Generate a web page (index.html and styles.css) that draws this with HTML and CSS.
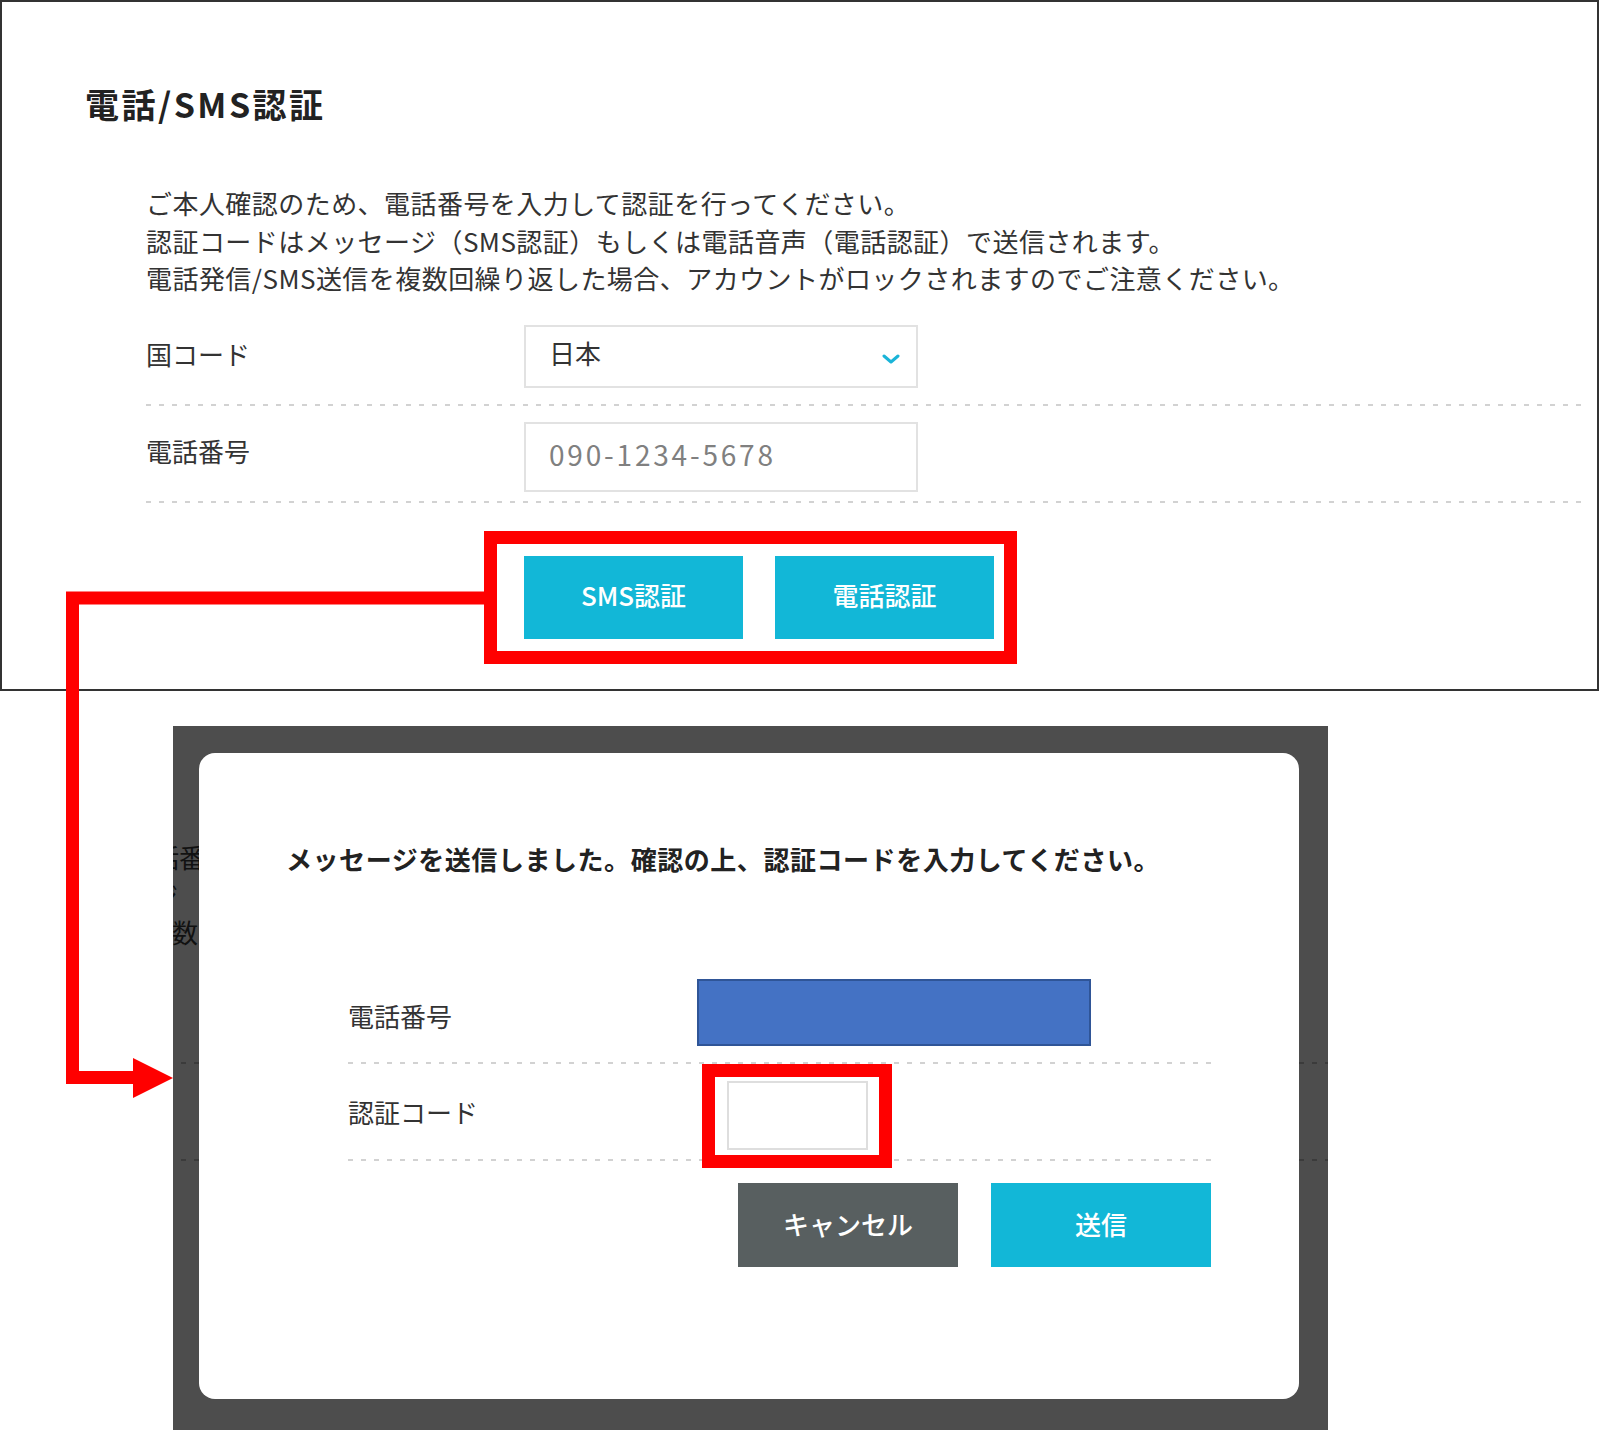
FILE: index.html
```html
<!DOCTYPE html>
<html lang="ja">
<head>
<meta charset="utf-8">
<title>電話/SMS認証</title>
<link rel="stylesheet" href="styles.css">
</head>
<body>
<div class="page">
  <section class="panel">
    <h1 class="title">電話/SMS認証</h1>
    <div class="panel-body">
      <p class="intro">ご本人確認のため、電話番号を入力して認証を行ってください。<br>認証コードはメッセージ（SMS認証）もしくは電話音声（電話認証）で送信されます。<br>電話発信/SMS送信を複数回繰り返した場合、アカウントがロックされますのでご注意ください。</p>
      <div class="form-row row-country">
        <div class="label">国コード</div>
        <div class="select">
          <span class="select-value">日本</span>
          <svg class="chev" width="18" height="10" viewBox="0 0 18 10"><polyline points="2,2 9,8 16,2" fill="none" stroke="#1ab4d8" stroke-width="3" stroke-linecap="round" stroke-linejoin="round"/></svg>
        </div>
      </div>
      <div class="sep"></div>
      <div class="form-row row-phone">
        <div class="label">電話番号</div>
        <input class="text-input" type="text" placeholder="090-1234-5678">
      </div>
      <div class="sep"></div>
      <div class="actions">
        <button class="btn btn-primary">SMS認証</button>
        <button class="btn btn-primary">電話認証</button>
      </div>
    </div>
  </section>

  <section class="backdrop">
    <div class="ghost">
      <div class="ghost-line g1">話番</div>
      <div class="ghost-line g2">ジ</div>
      <div class="ghost-line g3">数回</div>
    </div>
    <div class="modal">
      <p class="modal-msg">メッセージを送信しました。確認の上、認証コードを入力してください。</p>
      <div class="modal-form">
        <div class="m-row m-row1">
          <div class="label m-label1">電話番号</div>
          <div class="masked"></div>
        </div>
        <div class="sep m-sep"></div>
        <div class="m-row m-row2">
          <div class="label m-label2">認証コード</div>
          <input class="code-input" type="text">
        </div>
        <div class="sep m-sep"></div>
        <div class="m-actions">
          <button class="btn btn-dark">キャンセル</button>
          <button class="btn btn-primary">送信</button>
        </div>
      </div>
    </div>
  </section>

  <svg class="annotations" width="1600" height="1430" viewBox="0 0 1600 1430">
    <rect x="490.5" y="537.5" width="520" height="120" fill="none" stroke="#ff0000" stroke-width="13"/>
    <path d="M484 598 H72.5 V1077.5 H136" fill="none" stroke="#ff0000" stroke-width="13" stroke-linejoin="miter"/>
    <polygon points="133,1058 173,1078 133,1098" fill="#ff0000"/>
    <rect x="708.5" y="1070.5" width="177" height="91" fill="none" stroke="#ff0000" stroke-width="13"/>
  </svg>
</div>
</body>
</html>
```

FILE: styles.css
```css
* {
  box-sizing: border-box;
}

html, body {
  margin: 0;
  padding: 0;
  background: #ffffff;
}

body {
  font-family: "Noto Sans CJK JP", "Noto Sans", sans-serif;
  color: #333333;
}

.page {
  position: relative;
  width: 1600px;
  height: 1430px;
  overflow: hidden;
}

/* ---------- top panel ---------- */
.panel {
  width: 1599px;
  height: 691px;
  border: 2px solid #333333;
}

.title {
  margin: 78px 0 0 83px;
  font-size: 34px;
  line-height: 48px;
  font-weight: 700;
  color: #222222;
  letter-spacing: 2.5px;
}

.panel-body {
  padding: 0 10px 0 144px;
}

.intro {
  margin: 56px 0 20px;
  font-size: 26px;
  line-height: 37.5px;
  letter-spacing: 0.45px;
  color: #333333;
}

.form-row {
  display: flex;
  align-items: flex-start;
}

.row-country {
  padding: 8px 0 16px;
}

.row-phone {
  padding: 16px 0 9px;
}

.label {
  width: 378px;
  flex-shrink: 0;
  margin-top: 10px;
  font-size: 26px;
  line-height: 38px;
  color: #333333;
}

.select {
  width: 394px;
  height: 63px;
  border: 2px solid #e2e2e2;
  display: flex;
  align-items: center;
  padding: 0 16px 6px 23px;
  font-size: 26px;
  color: #333333;
}

.select-value {
  line-height: 38px;
}

.chev {
  margin-left: auto;
  margin-top: 11px;
}

.text-input {
  width: 394px;
  height: 70px;
  border: 2px solid #e2e2e2;
  padding: 0 0 6px 23px;
  margin: 0;
  font-family: "Noto Sans CJK JP", "Noto Sans", sans-serif;
  font-size: 28px;
  letter-spacing: 2.8px;
  color: #333333;
  background: #ffffff;
  outline: none;
}

.text-input::placeholder {
  color: #808080;
}

.sep {
  height: 2px;
  background-image: repeating-linear-gradient(to right, #d2d2d2 0 5px, transparent 5px 13px);
}

.actions {
  display: flex;
  gap: 32px;
  margin-top: 53px;
  padding-left: 378px;
}

.btn {
  width: 219px;
  height: 83px;
  border: none;
  margin: 0;
  padding: 0 0 6px;
  font-family: "Noto Sans CJK JP", "Noto Sans", sans-serif;
  font-size: 26px;
  font-weight: 500;
  color: #ffffff;
  cursor: pointer;
}

.btn-primary {
  background: #12b7d7;
}

.btn-dark {
  background: #585f60;
}

/* ---------- modal ---------- */
.backdrop {
  margin: 35px 0 0 173px;
  width: 1155px;
  height: 704px;
  padding-top: 27px;
  display: flex;
  align-items: flex-start;
  background-color: #4d4d4d;
  background-image:
    repeating-linear-gradient(to right, #3b3b3b 0 5px, transparent 5px 13px),
    repeating-linear-gradient(to right, #3b3b3b 0 5px, transparent 5px 13px);
  background-size: 100% 2px, 100% 2px;
  background-position: 8px 336px, 8px 433px;
  background-repeat: no-repeat;
}

.ghost {
  width: 26px;
  flex-shrink: 0;
  overflow: hidden;
  padding-top: 85px;
  font-size: 26px;
  line-height: 37.5px;
  color: #111111;
  white-space: nowrap;
}

.g1 {
  margin-left: -20px;
}

.g2 {
  margin-left: -21px;
}

.g3 {
  margin-left: -1px;
}

.modal {
  width: 1100px;
  height: 646px;
  background: #ffffff;
  border-radius: 16px;
  padding: 87px 0 0 87px;
}

.modal-msg {
  margin: 0;
  font-size: 26px;
  line-height: 38px;
  font-weight: 700;
  letter-spacing: 0.55px;
  color: #222222;
}

.modal-form {
  width: 863px;
  margin: 84px 0 0 62px;
}

.m-row {
  display: flex;
  align-items: flex-start;
}

.m-row .label {
  width: 349px;
}

.m-row1 {
  padding: 17px 0 16px;
}

.m-row2 {
  padding: 17px 0 9px;
}

.m-label1 {
  margin-top: 18px;
}

.m-label2 {
  margin-top: 12px;
}

.masked {
  width: 394px;
  height: 67px;
  background: #4472c4;
  border: 2px solid #2f5597;
}

.code-input {
  width: 141px;
  height: 69px;
  margin: 0 0 0 30px;
  padding: 0;
  border: 2px solid #dedede;
  background: #ffffff;
  outline: none;
}

.m-actions {
  display: flex;
  justify-content: flex-end;
  gap: 33px;
  margin-top: 22px;
}

.m-actions .btn {
  width: 220px;
  height: 84px;
  padding-bottom: 4px;
}

/* ---------- annotations ---------- */
.annotations {
  position: absolute;
  left: 0;
  top: 0;
  pointer-events: none;
}
```
